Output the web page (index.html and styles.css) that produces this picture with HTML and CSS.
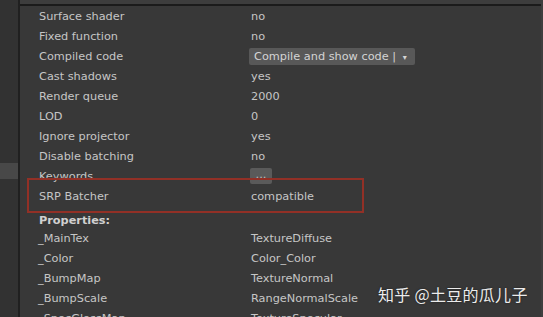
FILE: index.html
```html
<!doctype html>
<html lang="en">
    <head>
        <meta charset="utf-8" />
        <title>Shader Inspector</title>
        <link rel="stylesheet" href="styles.css">
    </head>

    <body>
        <div class="editor">
            <div class="sidebar">
                <div class="side-item"></div>
            </div>

            <div class="inspector">
                <div class="top-strip"></div>

                <div class="rows">
                    <div class="row"><span class="label">Surface shader</span><span class="value">no</span></div>
                    <div class="row"><span class="label">Fixed function</span><span class="value">no</span></div>
                    <div class="row">
                        <span class="label">Compiled code</span>
                        <span class="value"><span class="dropdown">Compile and show code | <span class="arrow">▾</span></span></span>
                    </div>
                    <div class="row"><span class="label">Cast shadows</span><span class="value">yes</span></div>
                    <div class="row"><span class="label">Render queue</span><span class="value">2000</span></div>
                    <div class="row"><span class="label">LOD</span><span class="value">0</span></div>
                    <div class="row"><span class="label">Ignore projector</span><span class="value">yes</span></div>
                    <div class="row"><span class="label">Disable batching</span><span class="value">no</span></div>
                    <div class="row">
                        <span class="label">Keywords</span>
                        <span class="value"><span class="small-btn">...</span></span>
                    </div>
                    <div class="row row-srp"><span class="label">SRP Batcher</span><span class="value">compatible</span></div>

                    <div class="row row-head"><span class="label">Properties:</span></div>

                    <div class="row prop"><span class="label">_MainTex</span><span class="value">TextureDiffuse</span></div>
                    <div class="row prop"><span class="label">_Color</span><span class="value">Color_Color</span></div>
                    <div class="row prop"><span class="label">_BumpMap</span><span class="value">TextureNormal</span></div>
                    <div class="row prop"><span class="label">_BumpScale</span><span class="value">RangeNormalScale</span></div>
                    <div class="row prop"><span class="label">_SpecGlossMap</span><span class="value">TextureSpecular</span></div>
                </div>

                <div class="watermark">知乎 @土豆的瓜儿子</div>
            </div>
        </div>
    </body>
</html>
```

FILE: styles.css
```css
html, body {
    margin: 0;
    padding: 0;
    background-color: #383838;
    overflow: hidden;
}
.editor {
    display: flex;
    width: 543px;
    height: 317px;
    font-family: "DejaVu Sans", Verdana, sans-serif;
    font-size: 11.3px;
    color: #c6c6c6;
}
.sidebar {
    width: 18px;
    flex: none;
    background-color: #323232;
    border-right: 2px solid #202020;
    padding-top: 163px;
}
.side-item {
    height: 16px;
    background-color: #484848;
}
.inspector {
    flex: 1;
    position: relative;
    background-color: #383838;
    border-right: 2px solid #3e3e3e;
}
.top-strip {
    height: 4px;
    background-color: #3d3d3d;
    border-bottom: 2px solid #1b1b1b;
}
.rows {
    padding-left: 19px;
}
.row {
    display: grid;
    grid-template-columns: 212px auto;
    align-items: center;
    height: 20px;
    white-space: nowrap;
}
.dropdown {
    display: inline-block;
    background-color: #585858;
    color: #d4d4d4;
    height: 17px;
    line-height: 17px;
    width: 161px;
    padding-left: 5px;
    margin-left: -2px;
    border-radius: 2px;
}
.arrow {
    font-size: 8px;
    margin-left: 3px;
}
.small-btn {
    display: inline-block;
    background-color: #5a5a5a;
    color: #bdbdbd;
    width: 22px;
    height: 16px;
    line-height: 13px;
    text-align: center;
    margin-left: -1px;
    border-radius: 2px;
}
.row-srp {
    position: relative;
    height: 21px;
}
.row-srp::after {
    content: "";
    position: absolute;
    left: -12px;
    top: -8px;
    width: 333px;
    height: 31px;
    border: 2px solid #923026;
}
.row-head {
    box-sizing: border-box;
    height: 21px;
    padding-top: 5px;
    font-weight: bold;
    color: #d0d0d0;
}
.prop .label {
    margin-left: -1px;
}
.watermark {
    position: absolute;
    left: 358px;
    top: 282px;
    font-family: "Noto Sans CJK SC", sans-serif;
    font-size: 16px;
    letter-spacing: 0.3px;
    color: #ececec;
    text-shadow: 0 0 2px rgba(0, 0, 0, 0.6);
}
```
